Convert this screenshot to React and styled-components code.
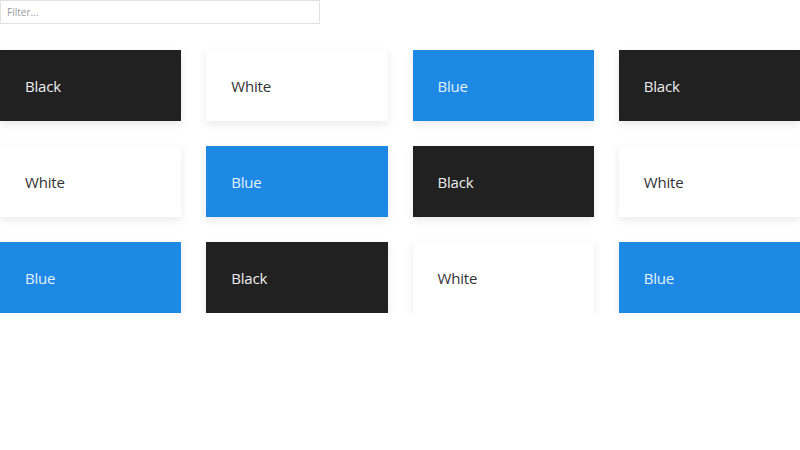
import styled, { createGlobalStyle } from 'styled-components';

const GlobalStyle = createGlobalStyle`
  body {
    margin: 0;
    background: #ffffff;
    font-family: "Open Sans", "Noto Sans", sans-serif;
  }
`;

const Page = styled.div`
  display: flex;
  flex-direction: column;
  gap: 26px;
`;

const FilterInput = styled.input`
  box-sizing: border-box;
  width: 320px;
  height: 24px;
  padding: 0 6px;
  border: 1px solid #e2e2e2;
  font-family: inherit;
  font-size: 10px;
  color: #333;
  outline: none;

  &::placeholder {
    color: #9a9a9a;
  }
`;

const Grid = styled.div`
  display: grid;
  grid-template-columns: repeat(4, 1fr);
  grid-auto-rows: 71px;
  gap: 25px;
`;

const palette = {
  Black: { bg: '#212121', fg: '#eeeeee' },
  White: { bg: '#ffffff', fg: '#333333' },
  Blue: { bg: '#1e88e5', fg: '#e3f2fd' },
};

const Card = styled.div`
  display: flex;
  align-items: center;
  padding-left: 25px;
  background: ${(p) => palette[p.$tone].bg};
  color: ${(p) => palette[p.$tone].fg};
  font-size: 15px;
  letter-spacing: -0.2px;
  box-shadow: 0 3px 8px rgba(0, 0, 0, 0.09);
`;

const items = [
  'Black', 'White', 'Blue', 'Black',
  'White', 'Blue', 'Black', 'White',
  'Blue', 'Black', 'White', 'Blue',
];

export default function App() {
  return (
    <Page>
      <GlobalStyle />
      <FilterInput type="text" placeholder="Filter..." />
      <Grid>
        {items.map((name, i) => (
          <Card key={i} $tone={name}>{name}</Card>
        ))}
      </Grid>
    </Page>
  );
}
